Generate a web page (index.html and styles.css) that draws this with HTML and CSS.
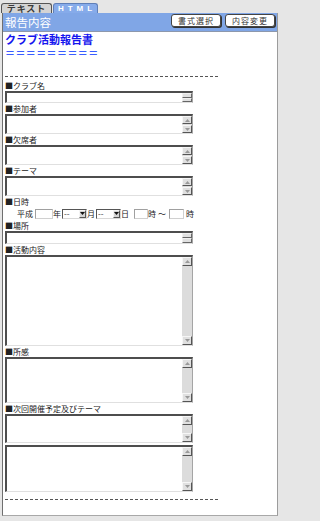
FILE: index.html
```html
<!DOCTYPE html>
<html lang="ja">
<head>
<meta charset="utf-8">
<title>報告内容</title>
<link rel="stylesheet" href="styles.css">
</head>
<body>
<div class="tabs">
  <div class="tab tab-text">テキスト</div>
  <div class="tab tab-html">HTML</div>
</div>
<div class="frame">
  <div class="header">
    <div class="header-title">報告内容</div>
    <div class="header-buttons">
      <button class="hbtn" type="button">書式選択</button>
      <button class="hbtn" type="button">内容変更</button>
    </div>
  </div>
  <div class="content">
    <div class="doc-title">クラブ活動報告書</div>
    <div class="doc-rule">＝＝＝＝＝＝＝＝＝</div>
    <div class="dash dash-top"></div>

    <div class="label first">■クラブ名</div>
    <div class="ta one h12"><textarea></textarea><div class="sb"><span class="sb-btn"></span><span class="sb-btn"></span></div></div>

    <div class="label">■参加者</div>
    <div class="ta h20"><textarea></textarea><div class="sb"><span class="sb-btn"><svg viewBox="0 0 5 3"><path d="M0 3L2.5 0L5 3Z"/></svg></span><span class="sb-track"></span><span class="sb-btn"><svg viewBox="0 0 5 3"><path d="M0 0L2.5 3L5 0Z"/></svg></span></div></div>

    <div class="label">■欠席者</div>
    <div class="ta h20"><textarea></textarea><div class="sb"><span class="sb-btn"><svg viewBox="0 0 5 3"><path d="M0 3L2.5 0L5 3Z"/></svg></span><span class="sb-track"></span><span class="sb-btn"><svg viewBox="0 0 5 3"><path d="M0 0L2.5 3L5 0Z"/></svg></span></div></div>

    <div class="label">■テーマ</div>
    <div class="ta h20"><textarea></textarea><div class="sb"><span class="sb-btn"><svg viewBox="0 0 5 3"><path d="M0 3L2.5 0L5 3Z"/></svg></span><span class="sb-track"></span><span class="sb-btn"><svg viewBox="0 0 5 3"><path d="M0 0L2.5 3L5 0Z"/></svg></span></div></div>

    <div class="label">■日時</div>
    <div class="date-row">
      <span class="dt">平成</span>
      <input class="num num-year" type="text">
      <span class="dt u-year">年</span>
      <span class="sel"><select><option>--</option></select><span class="sel-arrow"><svg viewBox="0 0 5 3"><path d="M0 0L2.5 3L5 0Z"/></svg></span></span>
      <span class="dt">月</span>
      <span class="sel"><select><option>--</option></select><span class="sel-arrow"><svg viewBox="0 0 5 3"><path d="M0 0L2.5 3L5 0Z"/></svg></span></span>
      <span class="dt">日</span>
      <input class="num num-h1" type="text">
      <span class="dt">時</span>
      <span class="dt tilde">～</span>
      <input class="num num-h2" type="text">
      <span class="dt u-end">時</span>
    </div>

    <div class="label">■場所</div>
    <div class="ta one h13"><textarea></textarea><div class="sb"><span class="sb-btn"></span><span class="sb-btn"></span></div></div>

    <div class="label">■活動内容</div>
    <div class="ta h91"><textarea></textarea><div class="sb"><span class="sb-btn"><svg viewBox="0 0 5 3"><path d="M0 3L2.5 0L5 3Z"/></svg></span><span class="sb-track"></span><span class="sb-btn"><svg viewBox="0 0 5 3"><path d="M0 0L2.5 3L5 0Z"/></svg></span></div></div>

    <div class="label">■所感</div>
    <div class="ta h46"><textarea></textarea><div class="sb"><span class="sb-btn"><svg viewBox="0 0 5 3"><path d="M0 3L2.5 0L5 3Z"/></svg></span><span class="sb-track"></span><span class="sb-btn"><svg viewBox="0 0 5 3"><path d="M0 0L2.5 3L5 0Z"/></svg></span></div></div>

    <div class="label">■次回開催予定及びテーマ</div>
    <div class="ta h29"><textarea></textarea><div class="sb"><span class="sb-btn"><svg viewBox="0 0 5 3"><path d="M0 3L2.5 0L5 3Z"/></svg></span><span class="sb-track"></span><span class="sb-btn"><svg viewBox="0 0 5 3"><path d="M0 0L2.5 3L5 0Z"/></svg></span></div></div>
    <div class="ta h47 next"><textarea></textarea><div class="sb"><span class="sb-btn"><svg viewBox="0 0 5 3"><path d="M0 3L2.5 0L5 3Z"/></svg></span><span class="sb-track"></span><span class="sb-btn"><svg viewBox="0 0 5 3"><path d="M0 0L2.5 3L5 0Z"/></svg></span></div></div>

    <div class="dash dash-bottom"></div>
  </div>
</div>
</body>
</html>
```

FILE: styles.css
```css
* { box-sizing: border-box; }
html, body { margin: 0; padding: 0; }
body {
  width: 280px;
  height: 521px;
  overflow: hidden;
  background: #e6e6e6;
  font-family: "Noto Sans CJK JP", "Noto Sans", sans-serif;
  color: #222;
}

/* tabs */
.tabs {
  display: flex;
  gap: 1px;
  height: 13px;
  padding: 3px 0 0 1px;
}
.tab {
  height: 10px;
  border: 1px solid #555;
  border-bottom: none;
  border-radius: 3px 3px 0 0;
  font-weight: bold;
  text-align: center;
}
.tab-text {
  width: 51px;
  background: #d4d4d4;
  color: #3a3a3a;
  font-size: 9px;
  line-height: 9px;
  letter-spacing: 1px;
}
.tab-html {
  width: 45px;
  background: #86abea;
  border-color: #5f7fb8;
  color: #fff;
  font-family: "Liberation Sans", sans-serif;
  font-size: 8px;
  line-height: 10px;
  letter-spacing: 4px;
  padding-left: 3px;
}

/* frame */
.frame {
  margin-left: 2px;
  width: 276px;
  height: 503px;
  background: #fff;
  border-left: 1px solid #6f6f6f;
  border-right: 1px solid #9c9c9c;
  border-bottom: 1px solid #a8a8a8;
}
.header {
  display: flex;
  justify-content: space-between;
  align-items: flex-start;
  height: 19px;
  padding: 1px 2px 0 2px;
  background: #80a6e6;
  border-bottom: 1px solid #8d98ac;
}
.header-title {
  color: #fff;
  font-size: 11.5px;
  line-height: 17px;
}
.header-buttons {
  display: flex;
  gap: 4px;
}
.hbtn {
  width: 50px;
  height: 13px;
  padding: 0;
  background: #fff;
  border: 1px solid #444;
  border-radius: 3px;
  box-shadow: 1px 1px 0 #333;
  font-family: "Noto Sans CJK JP", sans-serif;
  font-size: 8px;
  line-height: 11px;
  letter-spacing: 1px;
  color: #333;
}

/* content */
.content {
  padding-left: 2px;
}
.doc-title {
  color: #1515ee;
  font-weight: bold;
  font-size: 11px;
  line-height: 14px;
  margin-top: 0;
}
.doc-rule {
  margin-top: 2px;
  color: #3a5cff;
  font-weight: bold;
  font-size: 10px;
  line-height: 10px;
  letter-spacing: 0.4px;
}
.dash {
  width: 213px;
  height: 1px;
  background: repeating-linear-gradient(90deg, #555 0 3px, transparent 3px 5px);
}
.dash-top { margin-top: 18px; }
.dash-bottom { margin-top: 7px; }

.label {
  height: 11px;
  font-size: 8px;
  line-height: 11px;
  color: #222;
  white-space: nowrap;
}
.label.first { margin-top: 3px; }

/* textarea with classic scrollbar */
.ta {
  display: flex;
  width: 188px;
  background: #fff;
  border-style: solid;
  border-width: 2px 1px 1px 2px;
  border-color: #4e4e4e #a5a5a5 #e0e0e0 #4e4e4e;
}
.ta textarea {
  flex: 1;
  min-width: 0;
  display: block;
  margin: 0;
  padding: 0;
  border: none;
  outline: none;
  resize: none;
  overflow: hidden;
  background: #fff;
  font-family: inherit;
  font-size: 8px;
}
.sb {
  width: 10px;
  display: flex;
  flex-direction: column;
  background: #dcdcdc;
}
.sb-btn {
  flex: none;
  height: 9px;
  display: flex;
  align-items: center;
  justify-content: center;
  background: #e0e0e0;
  border-style: solid;
  border-width: 1px;
  border-color: #f6f6f6 #555 #555 #f6f6f6;
}
.sb-btn svg {
  width: 5px;
  height: 3px;
  fill: #999;
}
.sb-track { flex: 1; }
.ta.one .sb-btn {
  flex: 1;
  height: auto;
  border-color: #f0f0f0 #666 #666 #f0f0f0;
}
.ta.h20 .sb-btn { height: 8px; }

.h12 { height: 12px; }
.h13 { height: 13px; }
.h20 { height: 20px; }
.h29 { height: 29px; }
.h46 { height: 46px; }
.h47 { height: 47px; }
.h91 { height: 91px; }
.next { margin-top: 2px; }

/* date row */
.date-row {
  display: flex;
  align-items: center;
  height: 13px;
  padding-left: 12px;
  font-size: 8px;
  line-height: 10px;
  white-space: nowrap;
}
.num {
  height: 10px;
  margin: 0 0 0 2px;
  padding: 0;
  border: 1px solid;
  border-color: #a0a0a0 #d0d0d0 #d0d0d0 #a0a0a0;
  background: #fff;
  font-size: 8px;
}
.num-year { width: 18px; }
.num-h1 { width: 14px; margin-left: 5px; }
.num-h2 { width: 15px; margin-left: 3px; }
.tilde { margin-left: 2px; }
.u-end { margin-left: 2px; }
.sel {
  display: flex;
  width: 25px;
  height: 10px;
  margin-left: 1px;
  border: 1px solid;
  border-color: #555 #d8d8d8 #d8d8d8 #555;
  background: #fff;
}
.sel select {
  flex: 1;
  min-width: 0;
  appearance: none;
  -webkit-appearance: none;
  border: none;
  outline: none;
  margin: 0;
  padding: 0 0 0 1px;
  background: #fff;
  color: #333;
  font-family: inherit;
  font-size: 8px;
  line-height: 8px;
  height: 8px;
}
.sel-arrow {
  width: 7px;
  display: flex;
  align-items: center;
  justify-content: center;
  background: #d4d4d4;
  border-style: solid;
  border-width: 1px;
  border-color: #f4f4f4 #555 #555 #f4f4f4;
}
.sel-arrow svg {
  width: 5px;
  height: 3px;
  fill: #111;
}
```
